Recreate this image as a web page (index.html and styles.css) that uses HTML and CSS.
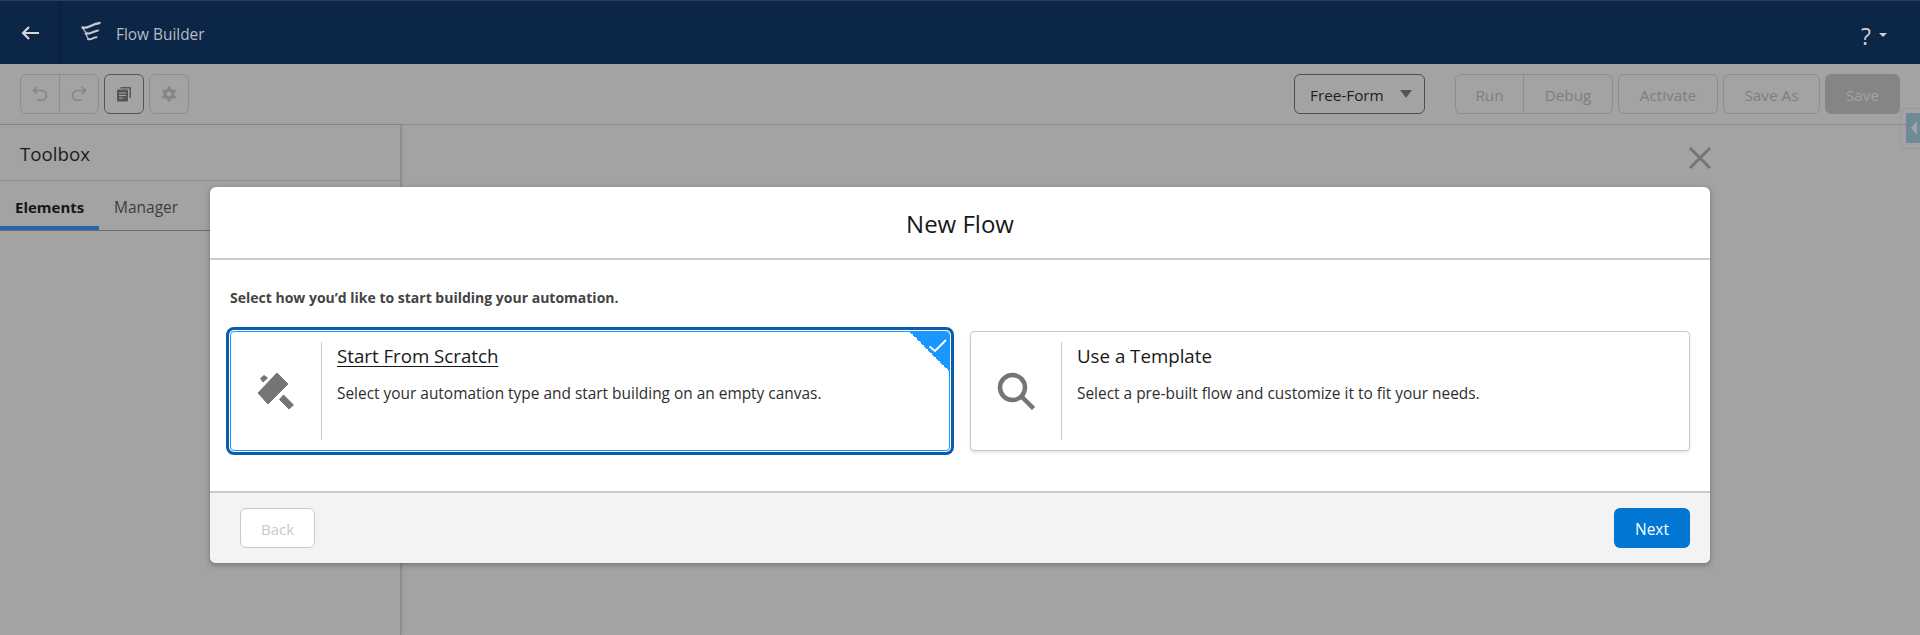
FILE: index.html
```html
<!DOCTYPE html>
<html lang="en">
<head>
<meta charset="utf-8">
<title>Flow Builder</title>
<link rel="stylesheet" href="styles.css">
</head>
<body>
<div class="app">
  <header class="topbar">
    <button class="back" aria-label="Back">
      <svg width="20" height="16" viewBox="0 0 20 16"><path d="M19 8H3M9 2 3 8l6 6" fill="none" stroke="#d6d6d6" stroke-width="2.200"/></svg>
    </button>
    <div class="brand">
      <svg class="brand-icon" width="20" height="21" viewBox="0 0 20 21"><g fill="none" stroke="#c4c7cc" stroke-linecap="round"><path d="M1.500 6.500c3 1 5 0 8-1.500s6-2.500 9-3" stroke-width="2.400"/><path d="M2 7.500c1 2 2.500 3.500 4 4.500" stroke-width="1.300"/><path d="M4.500 12.500c3 .8 5-.5 7-1.200s3-1.300 5.500-1.800" stroke-width="2.200"/><path d="M5 13c.5 1.500 1.200 3 2 4" stroke-width="1.200"/><path d="M7 18c2 .8 4-.3 5-.8s2-.8 3.500-1" stroke-width="2"/></g></svg>
      <span>Flow Builder</span>
    </div>
    <div class="help"><span class="q">?</span><span class="caret-small"></span></div>
  </header>
  <div class="toolbar">
    <div class="tools-left">
      <div class="group undo-group">
        <button class="tool" aria-label="Undo"><svg width="16" height="16" viewBox="0 0 16 16"><path d="M5 1 1.500 4.500 5 8M2 4.500h7.500a4.800 4.800 0 0 1 0 9.800H5" fill="none" stroke="#858585" stroke-width="1.600"/></svg></button>
        <button class="tool" aria-label="Redo"><svg width="16" height="16" viewBox="0 0 16 16"><path d="M11 1 14.500 4.500 11 8M14 4.500H6.500a4.800 4.800 0 0 0 0 9.800H11" fill="none" stroke="#858585" stroke-width="1.600"/></svg></button>
      </div>
      <button class="tool solo active" aria-label="Copy"><svg width="16" height="16" viewBox="0 0 16 16"><path d="M4.500 1H14a1 1 0 0 1 1 1v10h-1.500V2.500h-9z" fill="#555"/><rect x="1" y="3.500" width="11" height="12" rx="1" fill="#555"/><path d="M3 7h7M3 9.500h7M3 12h4" stroke="#a3a3a3" stroke-width="1.100"/></svg></button>
      <button class="tool solo" aria-label="Settings"><svg width="16" height="16" viewBox="0 0 16 16"><g fill="#858585"><circle cx="8" cy="8" r="5.600"/><path d="M6.500.5h3v3h-3zM6.500 12.500h3v3h-3z"/><path d="M6.500.5h3v3h-3zM6.500 12.500h3v3h-3z" transform="rotate(60 8 8)"/><path d="M6.500.5h3v3h-3zM6.500 12.500h3v3h-3z" transform="rotate(120 8 8)"/></g><circle cx="8" cy="8" r="2.400" fill="#a3a3a3"/></svg></button>
    </div>
    <div class="tools-right">
      <button class="mode"><span>Free-Form</span><span class="caret"></span></button>
      <div class="group run-group">
        <button class="action run">Run</button>
        <button class="action debug">Debug</button>
      </div>
      <button class="action solo activate">Activate</button>
      <button class="action solo saveas">Save As</button>
      <button class="action save">Save</button>
    </div>
  </div>
  <div class="workspace">
    <aside class="panel">
      <h2 class="panel-title">Toolbox</h2>
      <div class="tabs">
        <span class="tab current">Elements</span>
        <span class="tab">Manager</span>
      </div>
    </aside>
  </div>
  <div class="side-handle"><span class="handle-inner"><span class="handle-arrow"></span></span></div>
  <svg class="close" width="24" height="24" viewBox="0 0 24 24" aria-label="Close"><path d="M2 2l20 20M22 2 2 22" stroke="#757575" stroke-width="3"/></svg>
  <section class="modal">
    <div class="modal-head">New Flow</div>
    <div class="modal-body">
      <p class="lead">Select how you’d like to start building your automation.</p>
      <div class="cards">
        <div class="card selected">
          <div class="card-icon">
            <svg width="38" height="38" viewBox="0 0 38 38"><g fill="#757575" stroke="#757575" stroke-width="1" stroke-linejoin="round"><path d="M20 1 31 12 11 32 1 21z"/><path d="M26.500 23 36.500 33 32 37 22.500 27.500z"/><path d="M7 3.500 10.500 6 6 10 3.500 6.500z"/></g></svg>
          </div>
          <div class="card-text">
            <div class="card-title underlined">Start From Scratch</div>
            <div class="card-desc">Select your automation type and start building on an empty canvas.</div>
          </div>
          <span class="corner"></span>
          <svg class="check" width="20" height="16" viewBox="0 0 20 16"><path d="M1.500 8.500 7 13 18 2" fill="none" stroke="#fff" stroke-width="2"/></svg>
        </div>
        <div class="card">
          <div class="card-icon">
            <svg width="38" height="38" viewBox="0 0 38 38"><circle cx="15.500" cy="15.500" r="12.500" fill="none" stroke="#757575" stroke-width="4.500"/><path d="M24 24l12.500 12.500" stroke="#757575" stroke-width="4.500"/></svg>
          </div>
          <div class="card-text">
            <div class="card-title">Use a Template</div>
            <div class="card-desc">Select a pre-built flow and customize it to fit your needs.</div>
          </div>
        </div>
      </div>
    </div>
    <div class="modal-foot">
      <button class="btn-back">Back</button>
      <button class="btn-next">Next</button>
    </div>
  </section>
</div>
</body>
</html>
```
FILE: styles.css
```css
* { box-sizing: border-box; }
html, body { margin: 0; height: 100%; }
body { font-family: "Open Sans", "Noto Sans", sans-serif; background: #a3a3a3; overflow: hidden; }
button { font-family: inherit; margin: 0; padding: 0; cursor: pointer; }
.app { position: relative; width: 1920px; height: 635px; display: flex; flex-direction: column; background: #a3a3a3; }

.topbar { height: 64px; flex: none; display: flex; align-items: center; background: #0b2647; border-top: 1px solid #2a3f5c; }
.back { width: 61px; height: 63px; border: 0; border-right: 1px solid #0a1d36; background: none; display: flex; align-items: center; justify-content: center; }
.brand { display: flex; align-items: center; gap: 15px; margin-left: 20px; font-size: 15.400px; color: #b9bcc2; padding-top: 4px; }
.brand-icon { margin-top: -6px; }
.help { margin-left: auto; margin-right: 33px; display: flex; align-items: center; gap: 8px; color: #cfd0d2; padding-top: 6px; }
.q { font-size: 23px; line-height: 24px; }
.caret-small { width: 0; height: 0; border: 4px solid transparent; border-top: 4px solid #cfd0d2; border-bottom: 0; margin-top: -2px; }

.toolbar { height: 61px; flex: none; display: flex; justify-content: space-between; padding: 10px 20px 10px 20px; border-bottom: 1px solid #8a8a8a; }
.tools-left, .tools-right { display: flex; align-items: flex-start; }
.group { display: flex; border: 1px solid #8e8e8e; border-radius: 6px; height: 40px; }
.undo-group { width: 79px; }
.tool { flex: 1; height: 38px; border: 0; background: none; display: flex; align-items: center; justify-content: center; }
.group .tool + .tool { border-left: 1px solid #8e8e8e; }
.tool.solo { flex: none; width: 40px; height: 40px; border: 1px solid #8e8e8e; border-radius: 6px; margin-left: 5px; }
.tool.active { border-color: #555; }
.mode { width: 131px; height: 40px; border: 1px solid #4f4f4f; border-radius: 6px; background: none; display: flex; align-items: center; justify-content: space-between; padding: 2px 12px 0 15px; font-size: 15.300px; color: #1d1d1d; margin-right: 30px; }
.caret { width: 0; height: 0; border: 6px solid transparent; border-top: 8px solid #555; border-bottom: 0; margin-top: -2px; }
.run-group { width: 158px; }
.action { border: 0; background: none; color: #7e7e7e; font-size: 15.300px; height: 38px; padding-top: 2px; }
.run { width: 68px; border-right: 1px solid #8e8e8e; }
.debug { flex: 1; }
.action.solo { height: 40px; border: 1px solid #8e8e8e; border-radius: 6px; margin-left: 5px; }
.activate { width: 100px; }
.saveas { width: 97px; }
.save { width: 75px; height: 40px; margin-left: 5px; background: #858585; border-radius: 6px; color: #a3a3a3; }

.workspace { flex: 1; display: flex; min-height: 0; }
.panel { width: 401px; border-right: 1px solid #8a8a8a; box-shadow: 1px 0 3px rgba(0,0,0,.12); }
.panel-title { margin: 0; height: 56px; padding: 0 0 0 20px; font-weight: 400; font-size: 18.700px; line-height: 58px; color: #1d1d1d; border-bottom: 1px solid #8a8a8a; }
.tabs { display: flex; height: 50px; border-bottom: 1px solid #6b6b6b; font-size: 15.500px; color: #3e3e3e; }
.tab { padding: 0 15px; line-height: 53px; }
.tab.current { width: 99px; font-size: 15px; font-weight: 700; color: #161616; border-bottom: 4px solid #2e64a8; }

.side-handle { position: absolute; left: 1900px; top: 108px; width: 20px; height: 41px; border: 1px solid #999; border-right: 0; border-radius: 6px 0 0 6px; padding: 4px 0 5px 5px; }
.handle-inner { display: flex; align-items: center; padding-left: 5px; height: 100%; background: #6f8a96; }
.handle-arrow { width: 0; height: 0; border: 7px solid transparent; border-right: 6px solid #a3a3a3; border-left: 0; }
.close { position: absolute; left: 1688px; top: 146px; }

.modal { position: absolute; left: 210px; top: 187px; width: 1500px; height: 376px; display: flex; flex-direction: column; background: #fff; border-radius: 6px; box-shadow: 0 2px 6px rgba(0,0,0,.3); overflow: hidden; }
.modal-head { height: 73px; flex: none; border-bottom: 2px solid #c9c9c9; text-align: center; font-size: 24px; line-height: 74px; color: #181818; }
.modal-body { flex: 1; padding: 28px 20px 0; }
.lead { margin: 0 0 23px; font-size: 14px; line-height: 20px; font-weight: 700; color: #444; }
.cards { display: grid; grid-template-columns: 720px 720px; gap: 20px; }
.card { position: relative; height: 120px; display: flex; padding: 10px 0; background: #fff; border: 1px solid #c9c9c9; border-radius: 4px; box-shadow: 0 2px 3px rgba(0,0,0,.1); }
.card.selected { border-color: #1b96ff; box-shadow: 0 0 0 1px #fff, 0 0 0 4px #0b5cab; }
.card-icon { width: 91px; border-right: 1px solid #c9c9c9; display: flex; align-items: center; justify-content: center; flex: none; }
.card-text { padding-left: 15px; }
.card-title { font-size: 18.700px; line-height: 28px; color: #181818; }
.underlined { text-decoration: underline; text-underline-offset: 3px; text-decoration-thickness: 1px; }
.card-desc { margin-top: 13px; font-size: 15.430px; line-height: 22px; color: #2e2e2e; }
.corner { position: absolute; right: 0; top: 0; width: 39px; height: 39px; background: linear-gradient(to top right, transparent 50%, #1b96ff 50%); border-top-right-radius: 3px; }
.check { position: absolute; right: 1px; top: 6px; }

.modal-foot { height: 72px; flex: none; display: flex; justify-content: space-between; align-items: flex-start; padding: 15px 20px 0 30px; background: #f3f3f3; border-top: 2px solid #c9c9c9; }
.btn-back { width: 75px; height: 40px; background: #fff; border: 1px solid #c9c9c9; border-radius: 6px; color: #c9c9c9; font-size: 15px; padding-top: 2px; }
.btn-next { width: 76px; height: 40px; background: #0176d3; border: 0; border-radius: 6px; color: #fff; font-size: 15.500px; padding-top: 2px; }
```
